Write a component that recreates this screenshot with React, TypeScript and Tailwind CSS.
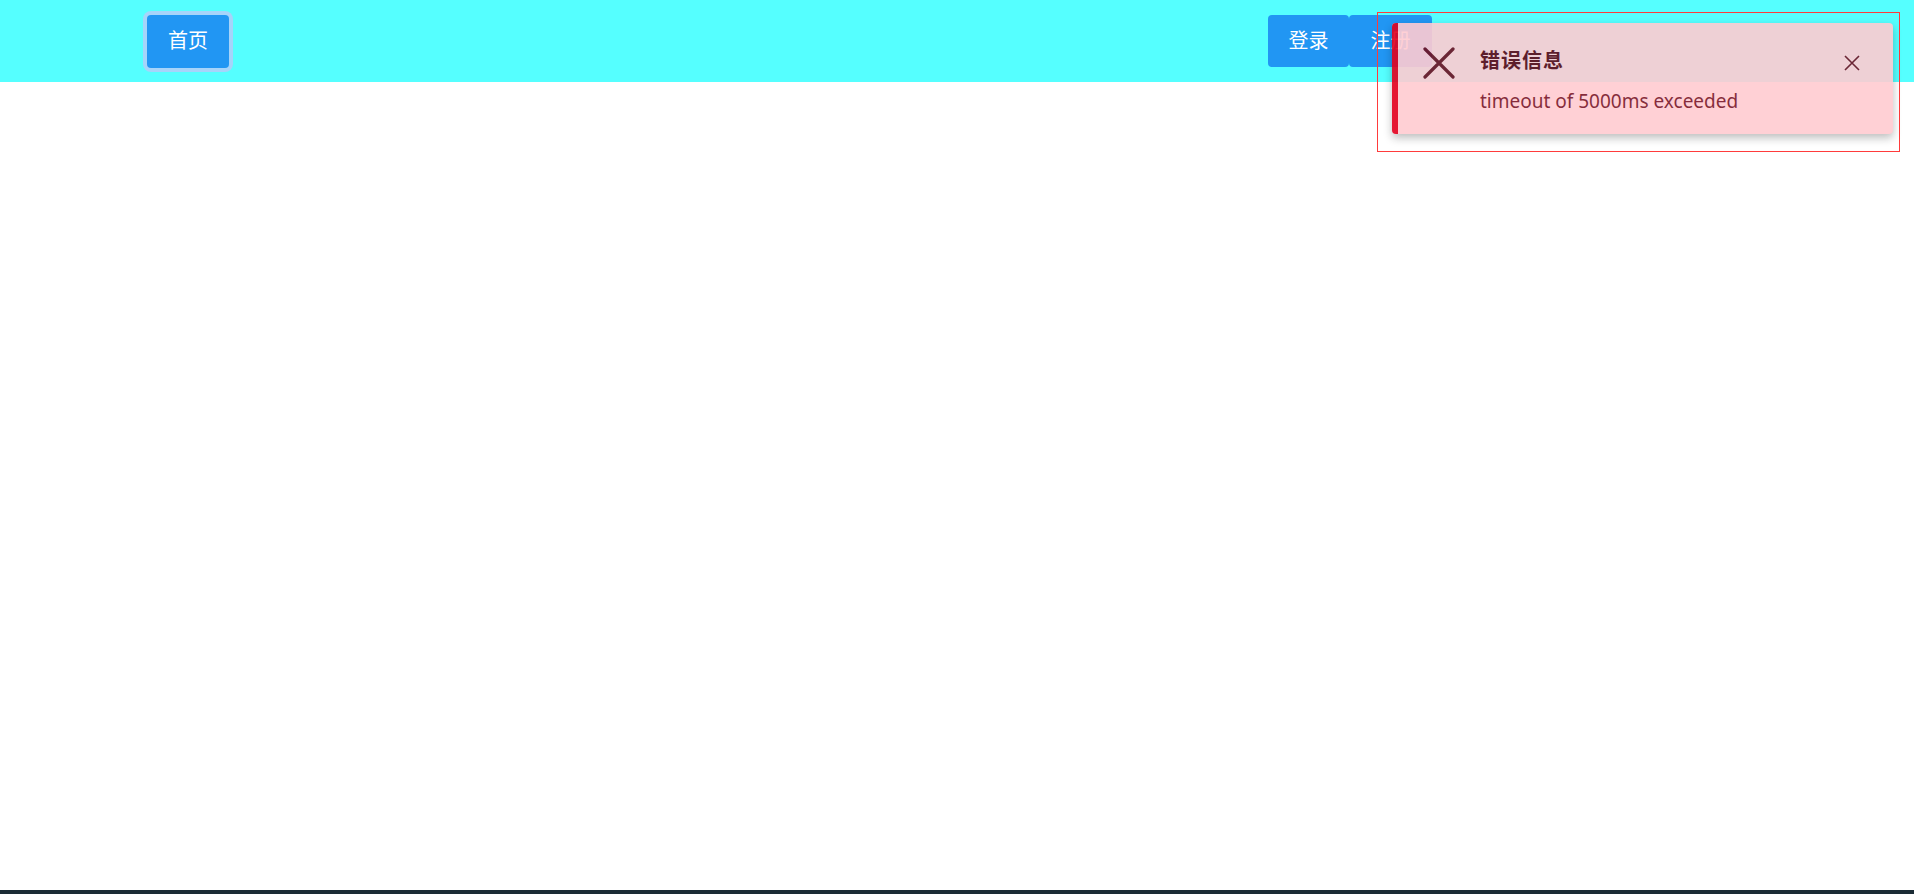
import React from "react";

const font = { fontFamily: '"Noto Sans", "Noto Sans CJK SC", sans-serif' };

function BigX() {
  return (
    <svg width="32" height="32" viewBox="0 0 32 32" fill="none">
      <path d="M2 2 L30 30 M30 2 L2 30" stroke="#6e0f20" strokeWidth="3.2" strokeLinecap="round" />
    </svg>
  );
}

function CloseX() {
  return (
    <svg width="16" height="16" viewBox="0 0 16 16" fill="none">
      <path d="M1 1 L15 15 M15 1 L1 15" stroke="#6e0f20" strokeWidth="1.6" />
    </svg>
  );
}

export default function App() {
  return (
    <div className="relative flex min-h-screen flex-col bg-white" style={font}>
      <header className="flex h-[82px] items-center justify-between bg-[#55ffff] pl-[147px] pr-[482px]">
        <button
          type="button"
          className="h-[53px] rounded-[4px] bg-[#2196f3] px-[21px] text-[20px] text-white ring-4 ring-[#a6d4fa]"
        >
          首页
        </button>
        <div className="flex">
          <button type="button" className="h-[52px] w-[81px] rounded-[4px] bg-[#2196f3] text-[20px] text-white">
            登录
          </button>
          <button type="button" className="h-[52px] w-[83px] rounded-[4px] bg-[#2196f3] text-[20px] text-white">
            注册
          </button>
        </div>
      </header>
      <main className="flex-1" />
      <div className="h-[4px] bg-[#1b2b35]" />

      <div className="absolute left-[1377px] top-[12px] h-[140px] w-[523px] border border-[#ff3b3b]">
        <div className="ml-[14px] mt-[10px] flex h-[111px] w-[501px] overflow-hidden rounded-[4px] bg-[#ffcbd1] opacity-90 shadow-[0_4px_8px_rgba(0,0,0,0.28)]">
          <div className="w-[6px] bg-[#e3001d]" />
          <div className="pl-[25px] pt-[24px]">
            <BigX />
          </div>
          <div className="flex-1 pl-[25px]">
            <p className="mt-[23px] text-[20px] font-bold leading-[30px] tracking-[1px] text-[#5e0615]">错误信息</p>
            <p className="mt-[12px] text-[19px] leading-[26px] text-[#7a1528]">timeout of 5000ms exceeded</p>
          </div>
          <div className="pr-[33px] pt-[32px]">
            <CloseX />
          </div>
        </div>
      </div>
    </div>
  );
}
